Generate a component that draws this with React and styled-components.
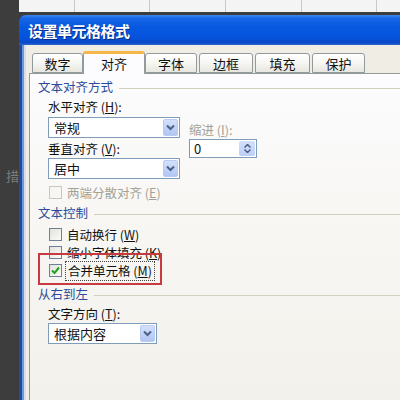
import styled, { createGlobalStyle } from "styled-components";

const GlobalStyle = createGlobalStyle`
  html, body {
    margin: 0;
    padding: 0;
    background: #3d3d3d;
  }
  body {
    font-family: "Noto Sans CJK SC", "Noto Sans", sans-serif;
  }
`;

const Page = styled.div`
  width: 400px;
  height: 400px;
  overflow: hidden;
  display: flex;
  flex-direction: row;
  background: #3d3d3d;
`;

const Gutter = styled.div`
  width: 19px;
  flex-shrink: 0;
  overflow: hidden;
  padding-top: 168px;
  box-sizing: border-box;
  color: #7c7c7c;
  font-size: 13px;
  line-height: 16px;
  text-align: right;
  white-space: nowrap;
  direction: rtl;
`;

const Main = styled.div`
  flex: 1;
  display: flex;
  flex-direction: column;
  min-width: 0;
`;

const TopStrip = styled.div`
  height: 12px;
  display: flex;
  background: #f4f4f4;
  margin-bottom: 3px;
`;

const Cell = styled.div`
  width: ${(p) => p.w}px;
  flex-shrink: 0;
  border-right: 1px solid #c9c9c9;
  box-sizing: border-box;
`;

const Dialog = styled.div`
  width: 420px;
  display: flex;
  flex-direction: column;
  flex: 1;
`;

const TitleBar = styled.div`
  height: 30px;
  border-top-left-radius: 7px;
  background: linear-gradient(
    to bottom,
    #3c86f0 0%,
    #1566e6 12%,
    #0758e0 40%,
    #0553dc 75%,
    #0a48c8 92%,
    #2f67cf 100%
  );
  display: flex;
  align-items: center;
  padding-left: 9px;
  color: #fff;
  font-size: 15px;
  font-weight: bold;
  letter-spacing: -0.5px;
  text-shadow: 1px 1px 0 #0a2f8a;
`;

const Frame = styled.div`
  flex: 1;
  display: flex;
  flex-direction: column;
  padding: 6px 0 0 10px;
  background: linear-gradient(
    to right,
    #1f4aa3 0,
    #1f4aa3 3px,
    #6f97da 3px,
    #6f97da 5px,
    #d6deee 5px,
    #d6deee 7px,
    #efede4 7px
  );
`;

const TabRow = styled.div`
  display: flex;
  align-items: flex-end;
  height: 22px;
  padding-left: 3px;
  position: relative;
  z-index: 1;
`;

const Tab = styled.div`
  width: ${(p) => p.w}px;
  height: ${(p) => (p.active ? 23 : 20)}px;
  margin: ${(p) => (p.active ? "0 0 -1px -2px" : "0 2px 0 0")};
  box-sizing: border-box;
  border: 1px solid #919b9c;
  border-bottom: ${(p) => (p.active ? "none" : "1px solid #919b9c")};
  border-radius: 3px 3px 0 0;
  background: ${(p) =>
    p.active
      ? "#fcfcfe"
      : "linear-gradient(to bottom, #ffffff 0%, #f6f6f3 50%, #e7e6df 100%)"};
  border-top: ${(p) => (p.active ? "3px solid #f5b64a" : "1px solid #919b9c")};
  display: flex;
  align-items: center;
  justify-content: center;
  font-size: 13px;
  line-height: 16px;
  color: #111;
  padding-top: ${(p) => (p.active ? 0 : 1)}px;
`;

const Panel = styled.div`
  flex: 1;
  border-top: 1px solid #919b9c;
  border-left: 1px solid #919b9c;
  background: linear-gradient(to bottom, #fcfcfe 0%, #f7f6f2 50%, #f2f1ec 100%);
  padding: 5px 0 0 8px;
  display: flex;
  flex-direction: column;
  font-size: 12.5px;
  line-height: 16px;
  color: #111;
`;

const GroupHead = styled.div`
  display: flex;
  align-items: center;
  gap: 6px;
  color: #2b4c9b;
  margin-top: ${(p) => p.mt || 0}px;
  height: 16px;
  &::after {
    content: "";
    flex: 1;
    height: 1px;
    background: #d0d0bf;
    margin-top: 2px;
  }
`;

const Indent = styled.div`
  padding-left: 10px;
  display: flex;
  flex-direction: column;
`;

const AlignRow = styled.div`
  display: flex;
  flex-direction: row;
  margin-top: 4px;
`;

const LeftCol = styled.div`
  width: 132px;
  display: flex;
  flex-direction: column;
`;

const RightCol = styled.div`
  margin-left: 9px;
  padding-top: 23px;
  display: flex;
  flex-direction: column;
`;

const Label = styled.div`
  height: 16px;
  color: ${(p) => (p.disabled ? "#a3a296" : "#111")};
  margin-top: ${(p) => p.mt || 0}px;
  white-space: nowrap;
`;

const Key = styled.span`
  text-decoration: underline;
`;

const SelectBox = styled.div`
  width: ${(p) => p.w}px;
  height: 21px;
  margin-top: ${(p) => p.mt || 0}px;
  box-sizing: border-box;
  border: 1px solid #7f9db9;
  background: #fff;
  display: flex;
  align-items: center;
  justify-content: space-between;
  padding: 0 1px 0 5px;
  font-size: 13px;
`;

const DropButton = styled.div`
  width: 15px;
  height: 17px;
  border-radius: 2px;
  background: linear-gradient(to bottom, #d4e0fb 0%, #c2d3f8 50%, #b1c6f3 100%);
  border: 1px solid #b9cbf2;
  box-sizing: border-box;
  display: flex;
  align-items: center;
  justify-content: center;
`;

const SpinBox = styled.div`
  width: 68px;
  height: 19px;
  margin-top: 1px;
  box-sizing: border-box;
  border: 1px solid #7f9db9;
  background: #fff;
  display: flex;
  align-items: center;
  justify-content: space-between;
  padding: 0 1px 0 4px;
  font-size: 13px;
`;

const SpinButton = styled.div`
  width: 16px;
  height: 15px;
  border-radius: 2px;
  background: linear-gradient(to bottom, #d4e0fb 0%, #bccff7 100%);
  display: flex;
  flex-direction: column;
  align-items: center;
  justify-content: center;
  gap: 1px;
`;

const CheckRow = styled.div`
  position: relative;
  display: flex;
  align-items: center;
  height: 17px;
  margin-top: ${(p) => p.mt || 0}px;
  color: ${(p) => (p.disabled ? "#a3a296" : "#111")};
  white-space: nowrap;
`;

const Box = styled.div`
  width: 13px;
  height: 13px;
  box-sizing: border-box;
  margin: 0 5px 0 1px;
  border: 1px solid ${(p) => (p.disabled ? "#cac8bb" : "#6e7f98")};
  background: ${(p) =>
    p.disabled ? "#f7f6f2" : "linear-gradient(135deg, #e3e3dc 0%, #fbfbf8 100%)"};
  display: flex;
  align-items: center;
  justify-content: center;
`;

const Focus = styled.span`
  outline: 1px dotted #444;
  outline-offset: 1px;
  padding: 0 1px;
`;

const RedMark = styled.div`
  position: absolute;
  left: -10px;
  top: -9px;
  width: 124px;
  height: 32px;
  box-sizing: border-box;
  border: 2px solid #c93a40;
  pointer-events: none;
`;

const Chevron = () => (
  <svg width="9" height="7" viewBox="0 0 9 7">
    <path d="M1 1.5 L4.5 5 L8 1.5" fill="none" stroke="#4d6185" strokeWidth="2" />
  </svg>
);

const Tick = () => (
  <svg width="9" height="9" viewBox="0 0 9 9">
    <path d="M1 4.5 L3.5 7 L8 1.5" fill="none" stroke="#21a121" strokeWidth="2" />
  </svg>
);

const tabs = [
  { name: "数字", w: 51 },
  { name: "对齐", w: 62, active: true },
  { name: "字体", w: 52 },
  { name: "边框", w: 54 },
  { name: "填充", w: 55 },
  { name: "保护", w: 53 },
];

export default function App() {
  return (
    <Page>
      <GlobalStyle />
      <Gutter>措</Gutter>
      <Main>
        <TopStrip>
          <Cell w={56} />
          <Cell w={75} />
          <Cell w={76} />
          <Cell w={76} />
          <Cell w={75} />
          <Cell w={75} />
        </TopStrip>
        <Dialog>
          <TitleBar>设置单元格格式</TitleBar>
          <Frame>
            <TabRow>
              {tabs.map((t) => (
                <Tab key={t.name} w={t.w} active={t.active}>
                  {t.name}
                </Tab>
              ))}
            </TabRow>
            <Panel>
              <GroupHead>文本对齐方式</GroupHead>
              <Indent>
                <AlignRow>
                  <LeftCol>
                    <Label>
                      水平对齐 (<Key>H</Key>):
                    </Label>
                    <SelectBox w={132} mt={2}>
                      常规
                      <DropButton>
                        <Chevron />
                      </DropButton>
                    </SelectBox>
                    <Label mt={3}>
                      垂直对齐 (<Key>V</Key>):
                    </Label>
                    <SelectBox w={132} mt={1}>
                      居中
                      <DropButton>
                        <Chevron />
                      </DropButton>
                    </SelectBox>
                  </LeftCol>
                  <RightCol>
                    <Label disabled>
                      缩进 (<Key>I</Key>):
                    </Label>
                    <SpinBox>
                      0
                      <SpinButton>
                        <svg width="7" height="4" viewBox="0 0 7 4">
                          <path d="M0.5 3.5 L3.5 0.5 L6.5 3.5" fill="none" stroke="#4d6185" strokeWidth="1.5" />
                        </svg>
                        <svg width="7" height="4" viewBox="0 0 7 4">
                          <path d="M0.5 0.5 L3.5 3.5 L6.5 0.5" fill="none" stroke="#4d6185" strokeWidth="1.5" />
                        </svg>
                      </SpinButton>
                    </SpinBox>
                  </RightCol>
                </AlignRow>
                <CheckRow disabled mt={5}>
                  <Box disabled />
                  两端分散对齐 (<Key>E</Key>)
                </CheckRow>
              </Indent>
              <GroupHead mt={4}>文本控制</GroupHead>
              <Indent>
                <CheckRow mt={5}>
                  <Box />
                  自动换行 (<Key>W</Key>)
                </CheckRow>
                <CheckRow mt={1}>
                  <Box />
                  缩小字体填充 (<Key>K</Key>)
                </CheckRow>
                <CheckRow mt={1}>
                  <Box>
                    <Tick />
                  </Box>
                  <Focus>
                    合并单元格 (<Key>M</Key>)
                  </Focus>
                  <RedMark />
                </CheckRow>
              </Indent>
              <GroupHead mt={7}>从右到左</GroupHead>
              <Indent>
                <Label mt={4}>
                  文字方向 (<Key>T</Key>):
                </Label>
                <SelectBox w={109} mt={1}>
                  根据内容
                  <DropButton>
                    <Chevron />
                  </DropButton>
                </SelectBox>
              </Indent>
            </Panel>
          </Frame>
        </Dialog>
      </Main>
    </Page>
  );
}
